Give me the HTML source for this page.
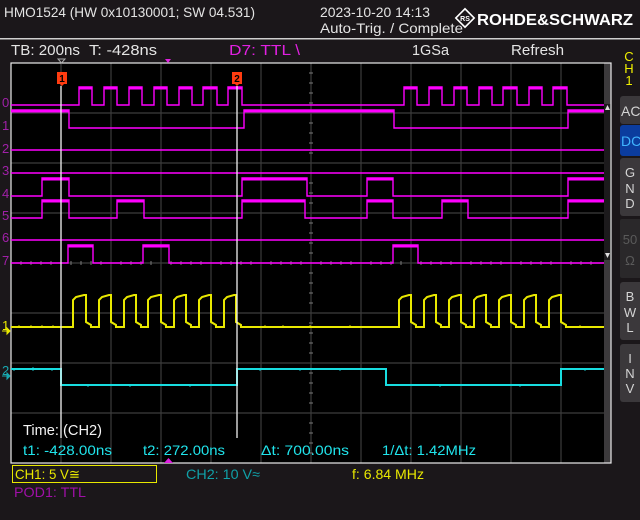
<!DOCTYPE html>
<html><head><meta charset="utf-8"><style>
html,body{margin:0;padding:0;background:#1b171a;}
svg{display:block}
text{font-family:"Liberation Sans",sans-serif;}
</style></head><body>
<svg width="640" height="520" viewBox="0 0 640 520" xmlns="http://www.w3.org/2000/svg">
<rect width="640" height="520" fill="#1b171a"/>
<!-- header -->
<text x="4" y="17" font-size="14" fill="#e4e4e4" textLength="251" lengthAdjust="spacingAndGlyphs">HMO1524 (HW 0x10130001; SW 04.531)</text>
<text x="320" y="17" font-size="14" fill="#e4e4e4" textLength="110" lengthAdjust="spacingAndGlyphs">2023-10-20 14:13</text>
<text x="320" y="33" font-size="14" fill="#e4e4e4" textLength="143" lengthAdjust="spacingAndGlyphs">Auto-Trig. / Complete</text>
<g transform="translate(465,18)">
<rect x="-6.5" y="-6.5" width="13" height="13" transform="rotate(45)" fill="#1b171a" stroke="#fff" stroke-width="1.6"/>
<text x="0" y="3" font-size="7" fill="#fff" text-anchor="middle" font-weight="bold">RS</text>
</g>
<text x="477" y="25" font-size="16" font-weight="bold" fill="#fff" textLength="156" lengthAdjust="spacingAndGlyphs">ROHDE&amp;SCHWARZ</text>
<rect x="0" y="38" width="640" height="1.5" fill="#cfcfcf"/>
<!-- TB row -->
<text x="11" y="55" font-size="15" fill="#e4e4e4" textLength="69" lengthAdjust="spacingAndGlyphs">TB: 200ns</text>
<text x="89" y="55" font-size="15" fill="#e4e4e4" textLength="68" lengthAdjust="spacingAndGlyphs">T: -428ns</text>
<text x="229" y="55" font-size="15" fill="#e020e0" textLength="71" lengthAdjust="spacingAndGlyphs">D7: TTL \</text>
<text x="412" y="55" font-size="15" fill="#e4e4e4" textLength="37" lengthAdjust="spacingAndGlyphs">1GSa</text>
<text x="511" y="55" font-size="15" fill="#e4e4e4" textLength="53" lengthAdjust="spacingAndGlyphs">Refresh</text>
<!-- CH1 label -->
<g font-size="13" fill="#f0f000" text-anchor="middle">
<text x="629" y="61">C</text><text x="629" y="73">H</text><text x="629" y="85">1</text>
</g>
<!-- side buttons -->
<rect x="620" y="96" width="24" height="28" rx="3" fill="#3b383b"/>
<text x="621" y="116" font-size="14" fill="#d4d4d4">AC</text>
<rect x="620" y="125" width="24" height="31" rx="3" fill="#0b3c9e"/>
<text x="621" y="146" font-size="14" fill="#40b4ff">DC</text>
<rect x="620" y="158" width="24" height="58" rx="3" fill="#3b383b"/>
<g font-size="13" fill="#d4d4d4" text-anchor="middle">
<text x="630" y="177">G</text><text x="630" y="193">N</text><text x="630" y="208">D</text>
</g>
<rect x="620" y="219" width="24" height="59" rx="2" fill="#2a282a"/>
<g font-size="13" fill="#5a5a5a" text-anchor="middle"><text x="630" y="244">50</text><text x="630" y="265">Ω</text></g>
<rect x="620" y="282" width="24" height="58" rx="3" fill="#3b383b"/>
<g font-size="13" fill="#d4d4d4" text-anchor="middle">
<text x="630" y="301">B</text><text x="630" y="317">W</text><text x="630" y="332">L</text>
</g>
<rect x="620" y="344" width="24" height="58" rx="3" fill="#3b383b"/>
<g font-size="13" fill="#d4d4d4" text-anchor="middle">
<text x="630" y="363">I</text><text x="630" y="378">N</text><text x="630" y="393">V</text>
</g>
<!-- screen -->
<rect x="11" y="63" width="600" height="400" fill="#000"/>
<g stroke="#3c3c3c" stroke-width="1.2">
<path d="M61 63V463M111 63V463M161 63V463M211 63V463M261 63V463M311 63V463M361 63V463M411 63V463M461 63V463M511 63V463M561 63V463"/>
<path d="M11 113H604M11 163H604M11 213H604M11 263H604M11 313H604M11 363H604M11 413H604"/>
</g>
<g stroke="#7a7a7a" stroke-width="1">
<path d="M309 73h4M309 83h4M309 93h4M309 103h4M309 123h4M309 133h4M309 143h4M309 153h4M309 173h4M309 183h4M309 193h4M309 203h4M309 223h4M309 233h4M309 243h4M309 253h4M309 273h4M309 283h4M309 293h4M309 303h4M309 323h4M309 333h4M309 343h4M309 353h4M309 373h4M309 383h4M309 393h4M309 403h4M309 423h4M309 433h4M309 443h4M309 453h4"/>
<path d="M21 261v4M31 261v4M41 261v4M51 261v4M71 261v4M81 261v4M91 261v4M101 261v4M121 261v4M131 261v4M141 261v4M151 261v4M171 261v4M181 261v4M191 261v4M201 261v4M221 261v4M231 261v4M241 261v4M251 261v4M271 261v4M281 261v4M291 261v4M301 261v4M321 261v4M331 261v4M341 261v4M351 261v4M371 261v4M381 261v4M391 261v4M401 261v4M421 261v4M431 261v4M441 261v4M451 261v4M471 261v4M481 261v4M491 261v4M501 261v4M521 261v4M531 261v4M541 261v4M551 261v4M571 261v4M581 261v4M591 261v4"/>
</g>
<!-- scrollbar -->
<rect x="604" y="63" width="7" height="400" fill="#3c3a3c"/>
<rect x="604" y="104" width="7" height="156" fill="#1c1a1c"/>
<path d="M605 110h5l-2.5 -5z" fill="#ddd"/><path d="M605 253h5l-2.5 5z" fill="#ddd"/>
<rect x="11" y="63" width="600" height="400" fill="none" stroke="#ececec" stroke-width="1.2"/>
<!-- digital labels -->
<g font-size="13" fill="#a020a8">
<text x="2" y="107">0</text><text x="2" y="130">1</text><text x="2" y="153">2</text><text x="2" y="175">3</text>
<text x="2" y="198">4</text><text x="2" y="220">5</text><text x="2" y="242">6</text><text x="2" y="265">7</text>
</g>
<!-- digital traces -->
<g fill="none" stroke="#ff00ff" stroke-width="1.4">
<path d="M11 105H79V87H92V105H104V87H117V105H129V87H142V105H154V87H167V105H179V87H192V105H203V87H217V105H228V87H242V105H404V87H417V105H429V87H442V105H454V87H467V105H479V87H492V105H503V87H517V105H529V87H542V105H553V87H567V105H604"/>
<path d="M11 110H69V128H244V110H394V128H568V110H604"/>
<path d="M11 150H604M11 173H604M11 240H604"/>
<path d="M11 196H42V178H69V196H242V178H307V196H367V178H393V196H568V178H604"/>
<path d="M11 218H42V200H69V218H117V200H144V218H242V200H305V218H367V200H393V218H442V200H468V218H568V200H604"/>
<path d="M11 263H68V245H93V263H143V245H169V263H393V245H418V263H604"/>
</g>
<g fill="none" stroke="#ff00ff" stroke-width="3">
<path d="M79 88H92M104 88H117M129 88H142M154 88H167M179 88H192M203 88H217M228 88H242M404 88H417M429 88H442M454 88H467M479 88H492M503 88H517M529 88H542M553 88H567"/>
<path d="M11 111H69M244 111H394M568 111H604"/>
<path d="M42 179H69M242 179H307M367 179H393M568 179H604"/>
<path d="M42 201H69M117 201H144M242 201H305M367 201H393M442 201H468M568 201H604"/>
<path d="M68 246H93M143 246H169M393 246H418"/>
</g>
<!-- analog -->
<path fill="none" stroke="#e8e800" stroke-width="2" d="M11 327H73V300L76 297L84 295H86V322L91 325V327H99V300L102 297L109 295H111V322L116 325V327H124V300L127 297L134 295H136V322L141 325V327H148V300L151 297L159 295H161V322L166 325V327H174V300L177 297L184 295H186V322L191 325V327H199V300L202 297L209 295H211V322L216 325V327H224V300L227 297L234 295H236V322L241 325V327H399V300L402 297L409 295H411V322L416 325V327H424V300L427 297L434 295H436V322L441 325V327H449V300L452 297L459 295H461V322L466 325V327H474V300L477 297L484 295H486V322L491 325V327H499V300L502 297L509 295H511V322L516 325V327H524V300L527 297L534 295H536V322L541 325V327H549V300L552 297L559 295H561V322L566 325V327H604"/>
<path stroke="#e8e800" stroke-width="0.8" d="M19 325v3M31 325v3M42 325v3M53 325v3M265 325v3M283 325v3M310 325v3M350 325v3M470 325v3M580 325v3"/>
<path fill="none" stroke="#18dde0" stroke-width="2" d="M11 369H61V385H237V369H386V385H561V369H604"/>
<path stroke="#18dde0" stroke-width="0.8" d="M14 368v3M33 367v4M52 368v3M88 384v3M130 384v3M190 384v3M260 368v3M300 368v3M340 368v3M440 384v3M520 384v3M585 368v3"/>
<!-- cursors -->
<path d="M61 86V438M237 86V438" stroke="#f0f0f0" stroke-width="1.3"/>
<path d="M57 72h10v12h-3l-2 2l-2-2h-3z" fill="#ff3c10"/>
<text x="62" y="82" font-size="10" fill="#000" text-anchor="middle" font-weight="bold">1</text>
<path d="M232 72h10v12h-3l-2 2l-2-2h-3z" fill="#ff3c10"/>
<text x="237" y="82" font-size="10" fill="#000" text-anchor="middle" font-weight="bold">2</text>
<!-- top markers -->
<path d="M58 59h7l-3.5 4z" fill="none" stroke="#aaa" stroke-width="1"/>
<path d="M165 59h6l-3 4z" fill="#e020e0"/>
<!-- analog markers -->
<text x="2" y="330" font-size="13" fill="#e8e800">1</text>
<path d="M2 331h6M7 328l3 3l-3 3z" stroke="#e8e800" fill="#e8e800" stroke-width="1"/>
<text x="2" y="375" font-size="13" fill="#18a8b0">2</text>
<path d="M2 376h6M7 373l3 3l-3 3z" stroke="#18a8b0" fill="#18a8b0" stroke-width="1"/>
<!-- measurements -->
<text x="23" y="435" font-size="15" fill="#f4f4f4" textLength="79" lengthAdjust="spacingAndGlyphs">Time: (CH2)</text>
<g font-size="14" fill="#20e4ec">
<text x="23" y="455" textLength="89" lengthAdjust="spacingAndGlyphs">t1: -428.00ns</text>
<text x="143" y="455" textLength="82" lengthAdjust="spacingAndGlyphs">t2: 272.00ns</text>
<text x="261" y="455" textLength="88" lengthAdjust="spacingAndGlyphs">Δt: 700.00ns</text>
<text x="382" y="455" textLength="94" lengthAdjust="spacingAndGlyphs">1/Δt: 1.42MHz</text>
</g>
<path d="M164 463h9l-4.5 -5z" fill="#e020e0"/>
<!-- bottom -->
<rect x="12.5" y="465.5" width="144" height="17" fill="none" stroke="#e8e800" stroke-width="1"/>
<text x="15" y="479" font-size="14" fill="#e8e800" textLength="65" lengthAdjust="spacingAndGlyphs">CH1: 5 V≅</text>
<text x="186" y="479" font-size="14" fill="#10a0a8" textLength="74" lengthAdjust="spacingAndGlyphs">CH2: 10 V≈</text>
<text x="352" y="479" font-size="14" fill="#e8e800" textLength="72" lengthAdjust="spacingAndGlyphs">f: 6.84 MHz</text>
<text x="14" y="497" font-size="14" fill="#a010a8" textLength="72" lengthAdjust="spacingAndGlyphs">POD1: TTL</text>
</svg>
</body></html>
